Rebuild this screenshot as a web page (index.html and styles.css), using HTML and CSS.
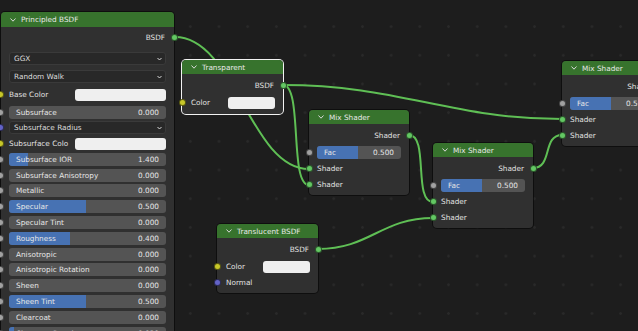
FILE: index.html
```html
<!DOCTYPE html>
<html lang="en">
<head>
    <meta charset="UTF-8">
    <title>Shader Editor</title>
    <link rel="stylesheet" href="styles.css">
</head>
<body>

<div id="editor">
    <svg class="wires" width="638" height="331" viewBox="0 0 638 331">
        <defs>
            <linearGradient id="sel-long" gradientUnits="userSpaceOnUse" x1="283" y1="85" x2="562" y2="119">
                <stop offset="0" stop-color="#e2f3dd"/>
                <stop offset="0.55" stop-color="#8fd585"/>
                <stop offset="1" stop-color="#62c258"/>
            </linearGradient>
            <linearGradient id="sel-short" gradientUnits="userSpaceOnUse" x1="283" y1="85" x2="309" y2="185">
                <stop offset="0" stop-color="#d6efd0"/>
                <stop offset="1" stop-color="#6cc862"/>
            </linearGradient>
        </defs>
        <path class="wire" d="M175 37 C235 37 250 169 309 169"/>
        <path class="wire" stroke="url(#sel-short)" d="M283 85 C303 85 289 185 309 185"/>
        <path class="wire" stroke="url(#sel-long)" d="M283 85 C400 85 450 119 562 119"/>
        <path class="wire" d="M409 135 C429 135 413 202 433 202"/>
        <path class="wire" d="M533 168 C553 168 542 135 562 135"/>
        <path class="wire" d="M318 249 C370 249 381 218 433 218"/>
    </svg>

    <!-- Principled BSDF -->
    <div class="node principled">
        <div class="node-head">
            <svg class="chev" width="6" height="4" viewBox="0 0 6 4"><polyline points="0.5,0.5 3,3.2 5.5,0.5"/></svg>
            Principled BSDF
        </div>
        <div class="node-body">
            <div class="row out"><span>BSDF</span><i class="sock shader"></i></div>
            <div class="props props-top">
                <div class="prop">
                    <div class="menu"><span>GGX</span><svg class="menu-chev" width="5" height="4" viewBox="0 0 5 4"><polyline points="0.5,1 2.5,3 4.5,1"/></svg></div>
                </div>
                <div class="prop">
                    <div class="menu"><span>Random Walk</span><svg class="menu-chev" width="5" height="4" viewBox="0 0 5 4"><polyline points="0.5,1 2.5,3 4.5,1"/></svg></div>
                </div>
                <div class="prop">
                    <i class="sock color"></i><span>Base Color</span><div class="swatch wide"></div>
                </div>
            </div>
            <div class="props">
                <div class="prop"><i class="sock float"></i>
                    <div class="slider"><span>Subsurface</span><span>0.000</span></div></div>
                <div class="prop"><i class="sock vector"></i>
                    <div class="menu"><span>Subsurface Radius</span><svg class="menu-chev" width="5" height="4" viewBox="0 0 5 4"><polyline points="0.5,1 2.5,3 4.5,1"/></svg></div></div>
                <div class="prop"><i class="sock color"></i><span>Subsurface Colo</span><div class="swatch wide"></div></div>
                <div class="prop"><i class="sock float"></i>
                    <div class="slider"><b class="fill" style="width: 12%"></b><span>Subsurface IOR</span><span>1.400</span></div></div>
                <div class="prop"><i class="sock float"></i>
                    <div class="slider"><span>Subsurface Anisotropy</span><span>0.000</span></div></div>
                <div class="prop"><i class="sock float"></i>
                    <div class="slider"><span>Metallic</span><span>0.000</span></div></div>
                <div class="prop"><i class="sock float"></i>
                    <div class="slider"><b class="fill" style="width: 49%"></b><span>Specular</span><span>0.500</span></div></div>
                <div class="prop"><i class="sock float"></i>
                    <div class="slider"><span>Specular Tint</span><span>0.000</span></div></div>
                <div class="prop"><i class="sock float"></i>
                    <div class="slider"><b class="fill" style="width: 39%"></b><span>Roughness</span><span>0.400</span></div></div>
                <div class="prop"><i class="sock float"></i>
                    <div class="slider"><span>Anisotropic</span><span>0.000</span></div></div>
                <div class="prop"><i class="sock float"></i>
                    <div class="slider"><span>Anisotropic Rotation</span><span>0.000</span></div></div>
                <div class="prop"><i class="sock float"></i>
                    <div class="slider"><span>Sheen</span><span>0.000</span></div></div>
                <div class="prop"><i class="sock float"></i>
                    <div class="slider"><b class="fill" style="width: 49%"></b><span>Sheen Tint</span><span>0.500</span></div></div>
                <div class="prop"><i class="sock float"></i>
                    <div class="slider"><span>Clearcoat</span><span>0.000</span></div></div>
                <div class="prop"><i class="sock float"></i>
                    <div class="slider"><b class="fill" style="width: 3%"></b><span>Clearcoat Roughness</span><span>0.030</span></div></div>
            </div>
        </div>
    </div>

    <!-- Transparent -->
    <div class="node transparent selected">
        <div class="node-head">
            <svg class="chev" width="6" height="4" viewBox="0 0 6 4"><polyline points="0.5,0.5 3,3.2 5.5,0.5"/></svg>
            Transparent
        </div>
        <div class="node-body">
            <div class="row out"><span>BSDF</span><i class="sock shader"></i></div>
            <div class="row first-in"><i class="sock color"></i><span>Color</span><div class="swatch"></div></div>
        </div>
    </div>

    <!-- Mix Shader 1 -->
    <div class="node mix mix-a">
        <div class="node-head">
            <svg class="chev" width="6" height="4" viewBox="0 0 6 4"><polyline points="0.5,0.5 3,3.2 5.5,0.5"/></svg>
            Mix Shader
        </div>
        <div class="node-body">
            <div class="row out"><span>Shader</span><i class="sock shader"></i></div>
            <div class="row first-in"><i class="sock float"></i>
                <div class="slider"><b class="fill" style="width: 49%"></b><span>Fac</span><span>0.500</span></div></div>
            <div class="row"><i class="sock shader"></i><span>Shader</span></div>
            <div class="row"><i class="sock shader"></i><span>Shader</span></div>
        </div>
    </div>

    <!-- Mix Shader 2 -->
    <div class="node mix mix-b">
        <div class="node-head">
            <svg class="chev" width="6" height="4" viewBox="0 0 6 4"><polyline points="0.5,0.5 3,3.2 5.5,0.5"/></svg>
            Mix Shader
        </div>
        <div class="node-body">
            <div class="row out"><span>Shader</span><i class="sock shader"></i></div>
            <div class="row first-in"><i class="sock float"></i>
                <div class="slider"><b class="fill" style="width: 49%"></b><span>Fac</span><span>0.500</span></div></div>
            <div class="row"><i class="sock shader"></i><span>Shader</span></div>
            <div class="row"><i class="sock shader"></i><span>Shader</span></div>
        </div>
    </div>

    <!-- Mix Shader 3 (partly off screen) -->
    <div class="node mix mix-c">
        <div class="node-head">
            <svg class="chev" width="6" height="4" viewBox="0 0 6 4"><polyline points="0.5,0.5 3,3.2 5.5,0.5"/></svg>
            Mix Shader
        </div>
        <div class="node-body">
            <div class="row out"><span>Shader</span><i class="sock shader"></i></div>
            <div class="row first-in"><i class="sock float"></i>
                <div class="slider"><b class="fill" style="width: 49%"></b><span>Fac</span><span>0.500</span></div></div>
            <div class="row"><i class="sock shader"></i><span>Shader</span></div>
            <div class="row"><i class="sock shader"></i><span>Shader</span></div>
        </div>
    </div>

    <!-- Translucent BSDF -->
    <div class="node translucent">
        <div class="node-head">
            <svg class="chev" width="6" height="4" viewBox="0 0 6 4"><polyline points="0.5,0.5 3,3.2 5.5,0.5"/></svg>
            Translucent BSDF
        </div>
        <div class="node-body">
            <div class="row out"><span>BSDF</span><i class="sock shader"></i></div>
            <div class="row first-in"><i class="sock color"></i><span>Color</span><div class="swatch"></div></div>
            <div class="row"><i class="sock vector"></i><span>Normal</span></div>
        </div>
    </div>
</div>

</body>
</html>
```

FILE: styles.css
```css
* {
    box-sizing: border-box;
}
body {
    margin: 0;
    background: #1d1d1d;
    font-family: 'DejaVu Sans', sans-serif;
    font-size: 7.3px;
    color: #e2e2e2;
    overflow: hidden;
}
#editor {
    position: relative;
    width: 638px;
    height: 331px;
    overflow: hidden;
    background-color: #1d1d1d;
    background-image: radial-gradient(circle, #292929 1px, rgba(41, 41, 41, 0) 1.6px);
    background-size: 28.7px 28.7px;
    background-position: 3.85px 12.25px;
}
.wires {
    position: absolute;
    left: 0;
    top: 0;
}
.wire {
    fill: none;
    stroke: #5fbf55;
    stroke-width: 2;
}

/* nodes */
.node {
    position: absolute;
    width: 100px;
    background: #303030;
    border-radius: 4px;
    box-shadow: 0 0 0 1px rgba(0, 0, 0, 0.5);
    z-index: 1;
}
.node.selected {
    box-shadow: 0 0 0 1px #f2f2f2;
}
.node-head {
    display: flex;
    align-items: center;
    gap: 5px;
    height: 14px;
    padding-left: 9px;
    background: #37732d;
    border-radius: 4px 4px 0 0;
    color: #e8e8e8;
    white-space: nowrap;
}
.chev {
    flex: none;
}
.chev polyline, .menu-chev polyline {
    fill: none;
    stroke: #d8d8d8;
    stroke-width: 1;
}
.node-body {
    padding: 3px 0 2px;
}
.row {
    position: relative;
    display: flex;
    align-items: center;
    height: 16px;
    padding: 0 8px 0 9px;
    white-space: nowrap;
}
.row.out {
    justify-content: flex-end;
    padding-right: 9px;
}
.row.first-in {
    margin-top: 1.5px;
}
.mix .row {
    padding-left: 8px;
}

/* sockets */
.sock {
    position: absolute;
    left: -3.5px;
    top: 50%;
    width: 7px;
    height: 7px;
    margin-top: -3.5px;
    border-radius: 50%;
    border: 1px solid rgba(0, 0, 0, 0.55);
}
.out .sock {
    left: auto;
    right: -3.5px;
}
.sock.shader { background: #63c763; }
.sock.float { background: #a1a1a1; }
.sock.color { background: #c7c729; }
.sock.vector { background: #6363c7; }

/* widgets */
.slider {
    position: relative;
    flex: 1;
    display: flex;
    justify-content: space-between;
    align-items: center;
    height: 13px;
    padding: 0 7px;
    background: #545454;
    border-radius: 3px;
    overflow: hidden;
    color: #e6e6e6;
}
.slider .fill {
    position: absolute;
    left: 0;
    top: 0;
    bottom: 0;
    background: #4772b3;
}
.slider span {
    position: relative;
}
.menu {
    flex: 1;
    display: flex;
    justify-content: space-between;
    align-items: center;
    height: 13px;
    padding: 0 3px 0 4px;
    background: #282828;
    border: 1px solid #3a3a3a;
    border-radius: 3px;
    color: #dcdcdc;
}
.swatch {
    width: 47px;
    height: 12px;
    margin-left: auto;
    background: #efefef;
    border-radius: 3px;
}
.swatch.wide {
    width: 91px;
}

/* principled panel */
.principled {
    left: 1px;
    top: 12px;
    width: 173px;
    height: 340px;
}
.principled .node-head {
    height: 15px;
}
.principled .node-body {
    padding-top: 2px;
}
.props {
    display: flex;
    flex-direction: column;
    gap: 2.8px;
    margin-top: 4.5px;
}
.props-top {
    gap: 5px;
    margin-top: 7px;
}
.prop {
    position: relative;
    display: flex;
    align-items: center;
    height: 13px;
    padding: 0 8px;
    white-space: nowrap;
}
.prop .sock {
    left: -4.5px;
}

/* node placement on the canvas */
.transparent {
    left: 182px;
    top: 60px;
    width: 101px;
}
.transparent .node-body {
    padding-bottom: 3px;
}
.mix-a {
    left: 309px;
    top: 110px;
}
.mix-b {
    left: 433px;
    top: 143px;
}
.mix-c {
    left: 562px;
    top: 61px;
}
.translucent {
    left: 217px;
    top: 224px;
    width: 101px;
}
```
